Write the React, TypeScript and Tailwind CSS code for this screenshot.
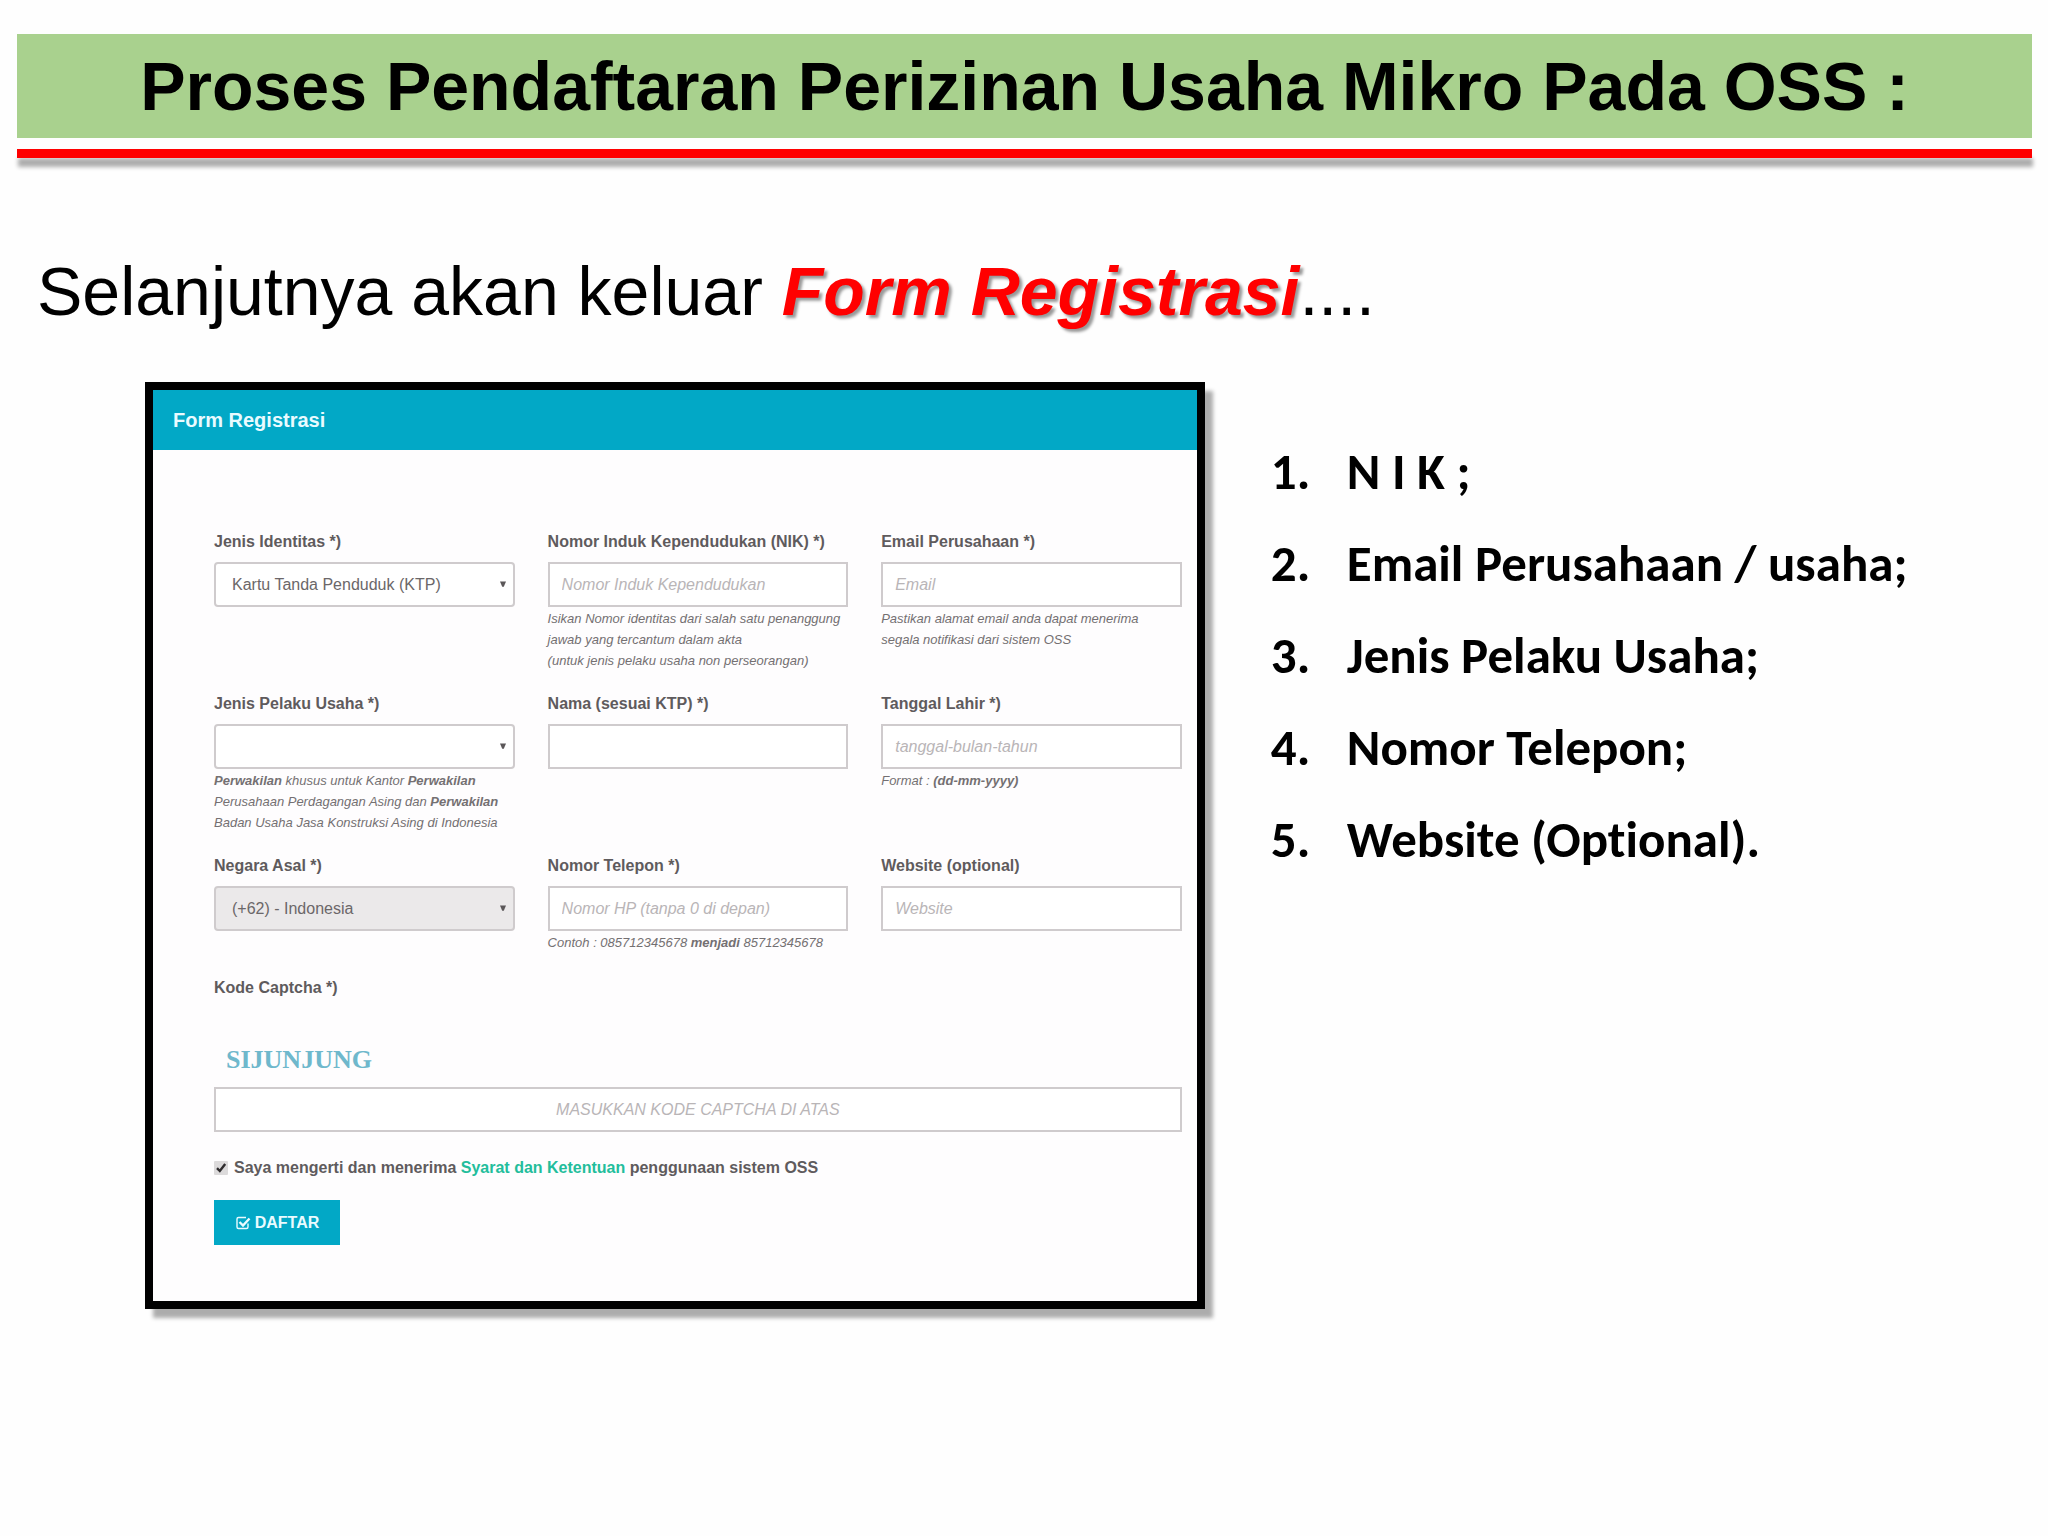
import React, { useState } from "react";

const requirements = [
    "N I K ;",
    "Email Perusahaan / usaha;",
    "Jenis Pelaku Usaha;",
    "Nomor Telepon;",
    "Website (Optional).",
];

const boxClass = "block w-full h-[45px] border-2 border-[#cfcbcd] text-base text-[#6b6769] placeholder:italic placeholder:text-[#b9b5b7] placeholder:opacity-100 outline-none";

type FieldProps = {
    id: string;
    label: string;
    help?: React.ReactNode;
    children: React.ReactNode;
};

function Field({ id, label, help, children }: FieldProps) {
    return (
        <div>
            <label htmlFor={id} className="block h-8 text-base leading-6 font-bold text-[#5f5b5d]">
                {label}
            </label>
            {children}
            {help && <p className="pt-px text-[13px] leading-[21px] italic text-[#747072] whitespace-nowrap">{help}</p>}
        </div>
    );
}

type SelectBoxProps = {
    id: string;
    options: string[];
    muted?: boolean;
};

function SelectBox({ id, options, muted }: SelectBoxProps) {
    return (
        <div className="relative">
            <select id={id} className={`${boxClass} appearance-none rounded-sm pl-4 pr-8 ${muted ? "bg-[#ebe9ea]" : "bg-white"}`}>
                {options.map((option) => (
                    <option key={option}>{option}</option>
                ))}
            </select>
            <svg className="absolute right-2 top-[18px] w-2 h-2 pointer-events-none" viewBox="0 0 8 8" fill="#5b5759">
                <path d="M1 1.5h6L4.8 6.8H3.2z" />
            </svg>
        </div>
    );
}

export default function App() {
    const [agreed, setAgreed] = useState(true);
    const [formData, setFormData] = useState({
        nik: "",
        email: "",
        nama: "",
        tanggal: "",
        telepon: "",
        website: "",
        captcha: "",
    });

    const handleChange = (e: React.ChangeEvent<HTMLInputElement>) => {
        setFormData({ ...formData, [e.target.name]: e.target.value });
    };

    const handleSubmit = (e: React.FormEvent) => {
        e.preventDefault();
    };

    const inputClass = `${boxClass} bg-white px-3`;

    return (
        <main className="min-h-screen bg-[#fefefe] pt-[34px] text-black font-['Liberation_Sans',Arial,sans-serif]">
            <header className="ml-[17px] mr-4">
                <h1 className="bg-[#a9d18e] pt-3 pb-3 text-center text-[68px] leading-[80px] font-bold">
                    Proses Pendaftaran Perizinan Usaha Mikro Pada OSS :
                </h1>
                <hr className="mt-[11px] h-[9px] border-0 bg-[#ff0000] shadow-[1px_9px_4px_rgba(0,0,0,0.32)]" />
            </header>

            <p className="mt-[93px] pl-[37px] text-[68px] leading-[80px]">
                Selanjutnya akan keluar{" "}
                <em className="font-bold text-[#ff0000] [text-shadow:3px_3px_3px_rgba(0,0,0,0.4)]">Form Registrasi</em>....
            </p>

            <div className="mt-[51px] pl-[145px] grid grid-cols-[15fr_11fr] gap-[66px] items-start">
                <section className="border-8 border-black bg-[#fefdfe] shadow-[8px_9px_4px_rgba(0,0,0,0.32)]">
                    <h2 className="bg-[#02a8c6] pl-5 text-xl leading-[60px] font-bold text-[#e9fbff]">Form Registrasi</h2>

                    <form onSubmit={handleSubmit} className="pt-20 pl-[61px] pr-[15px] pb-14">
                        <div className="grid grid-cols-3 auto-rows-[162px] gap-x-[33px]">
                            <Field id="identitas" label="Jenis Identitas *)">
                                <SelectBox id="identitas" options={["Kartu Tanda Penduduk (KTP)"]} />
                            </Field>
                            <Field
                                id="nik"
                                label="Nomor Induk Kependudukan (NIK) *)"
                                help={
                                    <>
                                        Isikan Nomor identitas dari salah satu penanggung
                                        <br />
                                        jawab yang tercantum dalam akta
                                        <br />
                                        (untuk jenis pelaku usaha non perseorangan)
                                    </>
                                }
                            >
                                <input id="nik" name="nik" value={formData.nik} onChange={handleChange} placeholder="Nomor Induk Kependudukan" className={inputClass} />
                            </Field>
                            <Field
                                id="email"
                                label="Email Perusahaan *)"
                                help={
                                    <>
                                        Pastikan alamat email anda dapat menerima
                                        <br />
                                        segala notifikasi dari sistem OSS
                                    </>
                                }
                            >
                                <input id="email" name="email" type="email" value={formData.email} onChange={handleChange} placeholder="Email" className={inputClass} />
                            </Field>

                            <Field
                                id="pelaku"
                                label="Jenis Pelaku Usaha *)"
                                help={
                                    <>
                                        <b>Perwakilan</b> khusus untuk Kantor <b>Perwakilan</b>
                                        <br />
                                        Perusahaan Perdagangan Asing dan <b>Perwakilan</b>
                                        <br />
                                        Badan Usaha Jasa Konstruksi Asing di Indonesia
                                    </>
                                }
                            >
                                <SelectBox id="pelaku" options={[""]} />
                            </Field>
                            <Field id="nama" label="Nama (sesuai KTP) *)">
                                <input id="nama" name="nama" value={formData.nama} onChange={handleChange} className={inputClass} />
                            </Field>
                            <Field id="tanggal" label="Tanggal Lahir *)" help={<>Format : <b>(dd-mm-yyyy)</b></>}>
                                <input id="tanggal" name="tanggal" value={formData.tanggal} onChange={handleChange} placeholder="tanggal-bulan-tahun" className={inputClass} />
                            </Field>

                            <Field id="negara" label="Negara Asal *)">
                                <SelectBox id="negara" options={["(+62) - Indonesia"]} muted />
                            </Field>
                            <Field id="telepon" label="Nomor Telepon *)" help={<>Contoh : 085712345678 <b>menjadi</b> 85712345678</>}>
                                <input id="telepon" name="telepon" type="tel" value={formData.telepon} onChange={handleChange} placeholder="Nomor HP (tanpa 0 di depan)" className={inputClass} />
                            </Field>
                            <Field id="website" label="Website (optional)">
                                <input id="website" name="website" value={formData.website} onChange={handleChange} placeholder="Website" className={inputClass} />
                            </Field>
                        </div>

                        <div className="-mt-10">
                            <label htmlFor="captcha" className="block text-base leading-6 font-bold text-[#5f5b5d]">
                                Kode Captcha *)
                            </label>
                            <div className="mt-10 pl-3 text-[26px] leading-[40px] font-bold text-[#6fb8cc] font-['Liberation_Serif',serif]">SIJUNJUNG</div>
                            <input id="captcha" name="captcha" value={formData.captcha} onChange={handleChange} placeholder="MASUKKAN KODE CAPTCHA DI ATAS" className={`${inputClass} mt-[7px] text-center`} />
                        </div>

                        <div className="mt-[26px] flex items-center text-base leading-5 font-bold text-[#5f5b5d]">
                            <input id="setuju" type="checkbox" checked={agreed} onChange={(e) => setAgreed(e.target.checked)} className="peer sr-only" />
                            <label htmlFor="setuju" className="flex items-center gap-1.5">
                                <svg className="w-[14px] h-[14px]" viewBox="0 0 14 14">
                                    <rect width="14" height="14" rx="1" fill="#dcdadb" />
                                    {agreed && <path d="M3 7.2 5.8 10 11.2 3" fill="none" stroke="#2f2c2e" strokeWidth="2.4" />}
                                </svg>
                                <span>
                                    Saya mengerti dan menerima{" "}
                                    <a href="#syarat" className="text-[#23bd9c]">Syarat dan Ketentuan</a> penggunaan sistem OSS
                                </span>
                            </label>
                        </div>

                        <button type="submit" className="mt-[22px] flex h-[45px] w-[126px] items-center justify-center gap-1 bg-[#02a8c6] text-base font-bold text-[#e9fbff]">
                            <svg className="w-4 h-4" viewBox="0 0 16 16" fill="none" stroke="currentColor">
                                <path d="M13 8.5V12a1.5 1.5 0 0 1-1.5 1.5h-8A1.5 1.5 0 0 1 2 12V4a1.5 1.5 0 0 1 1.5-1.5H11" strokeWidth="1.4" />
                                <path d="M4.5 7 8 10.5 14.5 3.5" strokeWidth="2.4" />
                            </svg>
                            DAFTAR
                        </button>
                    </form>
                </section>

                <ol className="mt-11 text-[51px] leading-[92px] font-bold [font-variant-ligatures:none] font-['Carlito','Lato',sans-serif]">
                    {requirements.map((item, i) => (
                        <li key={item} className="flex">
                            <span className="w-[76px]">{i + 1}.</span>
                            {item}
                        </li>
                    ))}
                </ol>
            </div>
        </main>
    );
}
